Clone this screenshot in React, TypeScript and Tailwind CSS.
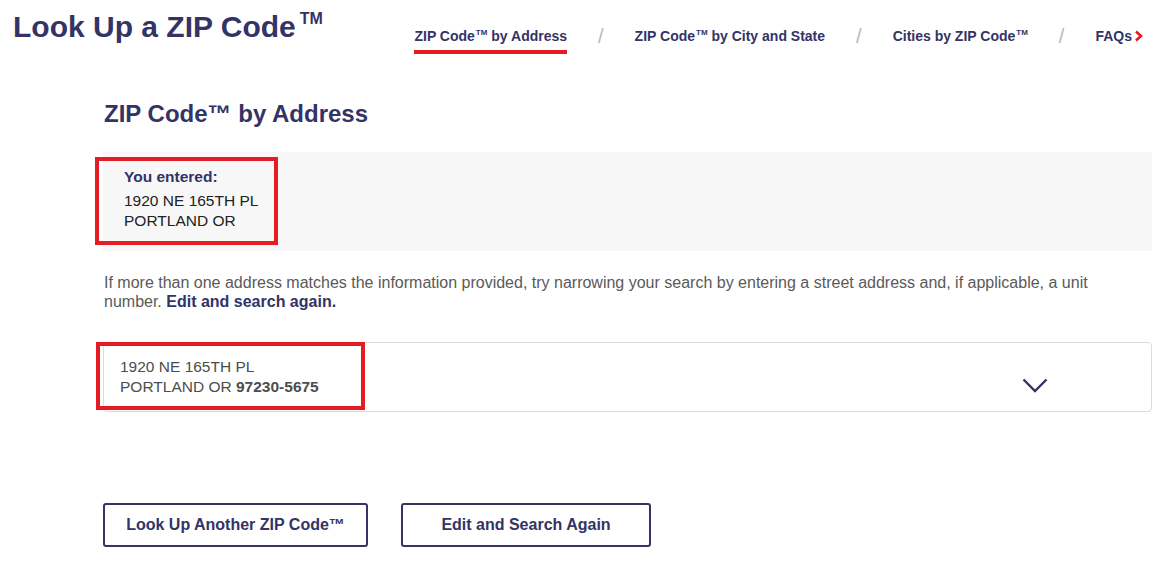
const navy = 'text-[#333366]';

function Tm() {
  return <sup className="text-[8px] font-bold -top-[6px] ml-[1px]">TM</sup>;
}

function Sep() {
  return <span className="text-[20px] font-light text-[#b8b8b8] leading-[20px] mx-[31px] -mt-[2px]">/</span>;
}

function Header() {
  return (
    <header className="flex items-start justify-between">
      <h1 className={`pl-[13px] pt-[9px] text-[30px] leading-[36px] font-bold ${navy}`}>
        Look Up a ZIP Code
        <sup className="text-[16px] font-bold -top-[13px] ml-[4px]">TM</sup>
      </h1>

      <nav className={`flex items-start pt-[28px] pr-[25px] text-[14px] leading-[16px] font-bold ${navy}`}>
        <a className="pb-[6px] border-b-4 border-[#e71921]">
          ZIP Code<Tm /> by Address
        </a>
        <Sep />
        <a>
          ZIP Code<Tm /> by City and State
        </a>
        <Sep />
        <a>
          Cities by ZIP Code<Tm />
        </a>
        <Sep />
        <a className="flex items-center">
          FAQs
          <svg width="10" height="12" viewBox="0 0 10 12" className="ml-[2px]">
            <polyline points="2,1.5 7,6 2,10.5" fill="none" stroke="#e71921" strokeWidth="2.6" />
          </svg>
        </a>
      </nav>
    </header>
  );
}

export default function App() {
  return (
    <div className="min-h-screen bg-white" style={{ fontFamily: '"Liberation Sans", Arial, sans-serif' }}>
      <Header />

      <main className="pl-[103px] pr-[17px]">
        <h2 className={`pt-[46px] pl-[1px] text-[24px] leading-[28px] font-bold ${navy}`}>ZIP Code™ by Address</h2>

        {/* You entered */}
        <section className="relative mt-[24px] bg-[#f7f7f7] pl-[21px] pt-[15px] pb-[20px]">
          <p className={`text-[15.5px] leading-[20px] font-bold ${navy}`}>You entered:</p>
          <div className="mt-[4px] text-[15.5px] leading-[20px] text-[#222]">
            <p>1920 NE 165TH PL</p>
            <p>PORTLAND OR</p>
          </div>
          <div className="absolute -left-[8px] top-[5px] w-[183px] h-[88px] border-4 border-[#e41c24] pointer-events-none" />
        </section>

        <p className="mt-[22px] pl-[1px] pr-[30px] text-[16px] leading-[19px] text-[#5a5a5a]">
          If more than one address matches the information provided, try narrowing your search by entering a street
          address and, if applicable, a unit number. <a className={`font-bold ${navy}`}>Edit and search again.</a>
        </p>

        {/* Result */}
        <section className="relative mt-[31px] flex items-start justify-between border border-[#dcdcdc] rounded-[4px] pl-[16px] pt-[14px] pb-[14px] pr-[103px]">
          <div className="text-[15.5px] leading-[20px] text-[#4d4d4d]">
            <p>1920 NE 165TH PL</p>
            <p>
              PORTLAND OR <span className="font-bold">97230-5675</span>
            </p>
          </div>
          <svg width="26" height="16" viewBox="0 0 26 16" className="mt-[21px]">
            <polyline points="1.5,1.5 13,13 24.5,1.5" fill="none" stroke="#333366" strokeWidth="2.4" />
          </svg>
          <div className="absolute -left-[8px] -top-[1px] w-[269px] h-[68px] border-4 border-[#e41c24] pointer-events-none" />
        </section>

        {/* Actions */}
        <div className="mt-[91px] flex gap-[33px]">
          <button className={`w-[265px] h-[44px] border-2 border-[#333366] rounded-[3px] text-[16px] font-bold ${navy}`}>
            Look Up Another ZIP Code™
          </button>
          <button className={`w-[250px] h-[44px] border-2 border-[#333366] rounded-[3px] text-[16px] font-bold ${navy}`}>
            Edit and Search Again
          </button>
        </div>
      </main>
    </div>
  );
}
